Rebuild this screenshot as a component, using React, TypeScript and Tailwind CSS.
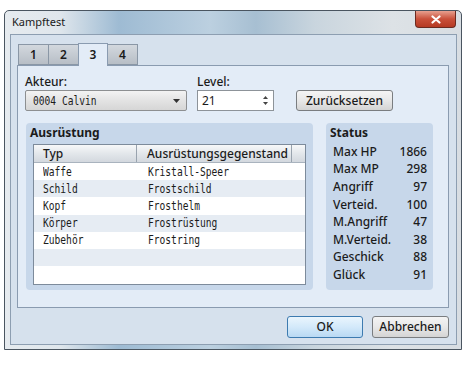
import React from "react";

const ui = { fontFamily: '"Noto Sans", "Open Sans", sans-serif' };
const mono = { fontFamily: '"DejaVu Sans Mono", "Liberation Mono", monospace' };

const rows = [
  ["Waffe", "Kristall-Speer"],
  ["Schild", "Frostschild"],
  ["Kopf", "Frosthelm"],
  ["Körper", "Frostrüstung"],
  ["Zubehör", "Frostring"],
  ["", ""],
  ["", ""],
];

const stats = [
  ["Max HP", "1866"],
  ["Max MP", "298"],
  ["Angriff", "97"],
  ["Verteid.", "100"],
  ["M.Angriff", "47"],
  ["M.Verteid.", "38"],
  ["Geschick", "88"],
  ["Glück", "91"],
];

function Tab({ label, active, last }: { label: string; active?: boolean; last?: boolean }) {
  if (active) {
    return (
      <div className="relative z-10 -mb-px flex h-[23px] w-[30px] items-center justify-center self-end border border-b-0 border-[#8a9bb0] bg-[#e3ecf7] text-[12px] font-semibold text-[#1b1b1b]">
        {label}
      </div>
    );
  }
  return (
    <div className={`flex h-[21px] w-[31px] items-center justify-center self-end border border-[#8a97a6] bg-[linear-gradient(to_bottom,#d3d8de,#b7bec6)] text-[12px] font-semibold text-[#1b1b1b] ${last ? "-ml-px" : "-mr-px"}`}>
      {label}
    </div>
  );
}

function Mono({ children }: { children: React.ReactNode }) {
  return (
    <span className="block origin-left scale-x-[0.8] whitespace-nowrap text-[12px] leading-[14px]" style={mono}>
      {children}
    </span>
  );
}

export default function App() {
  return (
    <div className="relative h-[366px] w-[474px] overflow-hidden bg-white" style={ui}>
      <div className="ml-[4px] mt-[10px] flex h-[340px] w-[458px] flex-col rounded-t-[5px] border border-[#4a5560] bg-[linear-gradient(to_right,#e6ebef_0%,#dfe6ec_12%,#9ebbd3_25%,#bcd0e0_45%,#a7bfd2_55%,#c9d5de_68%,#dde2e6_85%,#d8dde2_100%)] pb-[4px] pl-[5px] pr-[4px]">
        {/* title bar */}
        <div className="relative flex h-[23px] items-center">
          <span className="ml-[2px] text-[11px] text-[#1a1a1a]">Kampftest</span>
          <div className="absolute right-[1px] top-0 flex h-[17px] w-[41px] items-center justify-center rounded-b-[4px] border border-t-0 border-[#6b2a20] bg-[linear-gradient(to_bottom,#e8a08f,#c9503a_50%,#b53a24)]">
            <svg width="10" height="9" viewBox="0 0 10 9">
              <path d="M1.5 1.5 L8.5 7.5 M8.5 1.5 L1.5 7.5" stroke="#fff" strokeWidth="2.2" strokeLinecap="round" />
            </svg>
          </div>
        </div>
        {/* client */}
        <div className="flex flex-1 flex-col border border-[#8d9eb1] bg-[#d6e1ed] px-[6px] pt-[7px]">
          {/* tab widget */}
          <div className="flex flex-col">
            <div className="flex h-[23px] pl-[1px]">
              <Tab label="1" />
              <Tab label="2" />
              <Tab label="3" active />
              <Tab label="4" last />
            </div>
            <div className="h-[243px] w-[432px] border border-[#8a9bb0] bg-[#e3ecf7] px-[7px] pt-[9px]">
              <div className="flex items-end">
                <div className="flex flex-col">
                  <span className="mb-[1px] text-[12px] font-medium leading-[14px] text-[#1b1b1b]">Akteur:</span>
                  <div className="flex h-[21px] w-[162px] items-center justify-between rounded-[2px] border border-[#8d8f91] bg-[linear-gradient(to_bottom,#f3f3f3,#e3e3e3_50%,#d6d6d6)] pl-[7px] pr-[6px] text-[#1b1b1b]">
                    <Mono>0004 Calvin</Mono>
                    <svg width="7" height="4" viewBox="0 0 7 4"><path d="M0 0 H7 L3.5 4 Z" fill="#333" /></svg>
                  </div>
                </div>
                <div className="ml-[10px] flex flex-col">
                  <span className="mb-[1px] text-[12px] font-medium leading-[14px] text-[#1b1b1b]">Level:</span>
                  <div className="flex h-[21px] w-[77px] items-center justify-between border border-[#8d9399] bg-white pl-[4px] pr-[5px]">
                    <span className="text-[12px] text-[#1b1b1b]">21</span>
                    <div className="flex flex-col gap-[3px]">
                      <svg width="5" height="3" viewBox="0 0 5 3"><path d="M0 3 H5 L2.5 0 Z" fill="#444" /></svg>
                      <svg width="5" height="3" viewBox="0 0 5 3"><path d="M0 0 H5 L2.5 3 Z" fill="#444" /></svg>
                    </div>
                  </div>
                </div>
                <div className="ml-[22px] flex h-[21px] w-[97px] items-center justify-center rounded-[3px] border border-[#7a7d80] bg-[linear-gradient(to_bottom,#f4f4f4,#e8e8e8_50%,#d4d4d4)] text-[12px] font-medium text-[#1b1b1b]">
                  Zurücksetzen
                </div>
              </div>
              {/* groups */}
              <div className="mt-[12px] flex gap-[13px] pl-[1px]">
                <div className="flex h-[167px] w-[287px] flex-col rounded-[4px] bg-[#c7d7ea] px-[7px] pb-[5px]">
                  <span className="ml-[-3px] mt-[2px] h-[19px] text-[12px] font-bold leading-[16px] text-[#1b1b1b]">Ausrüstung</span>
                  <div className="flex flex-1 flex-col overflow-hidden border border-[#7d8b9b] bg-white">
                    <div className="flex h-[18px] shrink-0 border-b border-[#a9b3be] bg-[linear-gradient(to_bottom,#f7f8f9,#e3e7eb_50%,#d3d8de)] text-[12px] font-medium text-[#1b1b1b]">
                      <div className="flex w-[103px] items-center border-r border-[#99a3ae] pl-[9px]">Typ</div>
                      <div className="flex w-[155px] items-center border-r border-[#99a3ae] pl-[10px]">Ausrüstungsgegenstand</div>
                      <div className="flex-1" />
                    </div>
                    {rows.map((r, i) => (
                      <div
                        key={i}
                        className={`flex h-[17.2px] shrink-0 items-center text-[#1b1b1b] ${i % 2 === 1 ? "bg-[#e6ecf3]" : "bg-white"}`}
                      >
                        <div className="flex w-[103px] items-center pl-[9px]"><Mono>{r[0]}</Mono></div>
                        <div className="flex items-center pl-[11px]"><Mono>{r[1]}</Mono></div>
                      </div>
                    ))}
                  </div>
                </div>
                <div className="flex h-[167px] w-[107px] flex-col rounded-[4px] bg-[#c7d7ea] pl-[4px] pr-[6px]">
                  <span className="mt-[2px] h-[18px] text-[12px] font-bold leading-[16px] text-[#1b1b1b]">Status</span>
                  <div className="flex flex-col pl-[3px]">
                    {stats.map(([k, v]) => (
                      <div key={k} className="flex h-[17.6px] items-center justify-between text-[12px] font-medium text-[#1b1b1b]">
                        <span>{k}</span>
                        <span>{v}</span>
                      </div>
                    ))}
                  </div>
                </div>
              </div>
            </div>
          </div>
          {/* bottom buttons */}
          <div className="mt-[8px] flex justify-end gap-[9px] pr-[1px]">
            <div className="flex h-[22px] w-[76px] items-center justify-center rounded-[3px] border border-[#3d7bb0] bg-[linear-gradient(to_bottom,#eaf5fd,#d3e9fa_50%,#b9d9f3)] text-[12px] font-medium text-[#1b1b1b]">
              OK
            </div>
            <div className="flex h-[22px] w-[77px] items-center justify-center rounded-[3px] border border-[#7a7d80] bg-[linear-gradient(to_bottom,#f4f4f4,#e8e8e8_50%,#d4d4d4)] text-[12px] font-medium text-[#1b1b1b]">
              Abbrechen
            </div>
          </div>
        </div>
      </div>
    </div>
  );
}
